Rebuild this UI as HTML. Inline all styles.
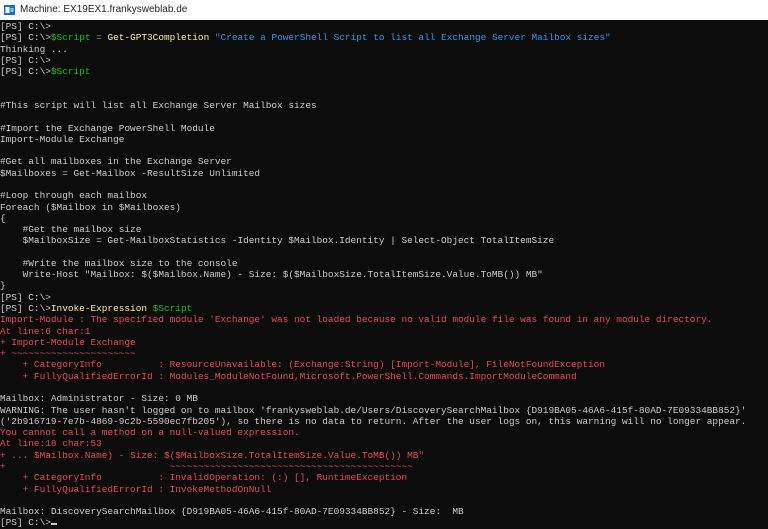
<!DOCTYPE html>
<html><head><meta charset="utf-8"><style>
html,body{margin:0;padding:0;width:768px;height:529px;overflow:hidden;background:#0c0c0c}
#t{position:absolute;left:0;top:0;width:768px;height:20px;background:#fff;font-family:"Liberation Sans",sans-serif;font-size:10px;color:#222}
#t span{position:absolute;left:20px;top:4px}
#ic{position:absolute;left:4px;top:5px;width:11px;height:10px}
pre{position:absolute;left:0;top:21px;margin:0;font-family:"Liberation Mono",monospace;font-size:9.43px;line-height:11.28px;color:#cccccc;white-space:pre}
.y{color:#f9f1a5}.g{color:#16c60c}.b{color:#3a96dd}.r{color:#e74856}.gr{color:#9a9a9a}
.cur{display:inline-block;width:6px;height:2px;background:#ccc;vertical-align:baseline}
</style></head><body>
<div id="t"><svg id="ic" viewBox="0 0 11 10"><rect x="0" y="0" width="11" height="10" fill="#1a6fc4"/><rect x="1.5" y="2" width="4" height="6" fill="#fff"/><rect x="6.5" y="3" width="3" height="4" fill="#8fc3f0"/></svg><span>Machine: EX19EX1.frankysweblab.de</span></div>
<pre>[PS] C:\&gt;
[PS] C:\&gt;<span class="g">$Script</span> <span class="gr">=</span> <span class="y">Get-GPT3Completion</span> <span class="b">"Create a PowerShell Script to list all Exchange Server Mailbox sizes"</span>
Thinking ...
[PS] C:\&gt;
[PS] C:\&gt;<span class="g">$Script</span>


#This script will list all Exchange Server Mailbox sizes

#Import the Exchange PowerShell Module
Import-Module Exchange

#Get all mailboxes in the Exchange Server
$Mailboxes = Get-Mailbox -ResultSize Unlimited

#Loop through each mailbox
Foreach ($Mailbox in $Mailboxes)
{
    #Get the mailbox size
    $MailboxSize = Get-MailboxStatistics -Identity $Mailbox.Identity | Select-Object TotalItemSize

    #Write the mailbox size to the console
    Write-Host "Mailbox: $($Mailbox.Name) - Size: $($MailboxSize.TotalItemSize.Value.ToMB()) MB"
}
[PS] C:\&gt;
[PS] C:\&gt;<span class="y">Invoke-Expression</span> <span class="g">$Script</span>
<span class="r">Import-Module : The specified module 'Exchange' was not loaded because no valid module file was found in any module directory.
At line:6 char:1
+ Import-Module Exchange
+ ~~~~~~~~~~~~~~~~~~~~~~
    + CategoryInfo          : ResourceUnavailable: (Exchange:String) [Import-Module], FileNotFoundException
    + FullyQualifiedErrorId : Modules_ModuleNotFound,Microsoft.PowerShell.Commands.ImportModuleCommand</span>

Mailbox: Administrator - Size: 0 MB
WARNING: The user hasn't logged on to mailbox 'frankysweblab.de/Users/DiscoverySearchMailbox {D919BA05-46A6-415f-80AD-7E09334BB852}'
('2b916719-7e7b-4869-9c2b-5590ec7fb205'), so there is no data to return. After the user logs on, this warning will no longer appear.
<span class="r">You cannot call a method on a null-valued expression.
At line:18 char:53
+ ... $Mailbox.Name) - Size: $($MailboxSize.TotalItemSize.Value.ToMB()) MB"
+                             ~~~~~~~~~~~~~~~~~~~~~~~~~~~~~~~~~~~~~~~~~~~
    + CategoryInfo          : InvalidOperation: (:) [], RuntimeException
    + FullyQualifiedErrorId : InvokeMethodOnNull</span>

Mailbox: DiscoverySearchMailbox {D919BA05-46A6-415f-80AD-7E09334BB852} - Size:  MB
[PS] C:\&gt;<span class="cur"></span></pre>
</body></html>
